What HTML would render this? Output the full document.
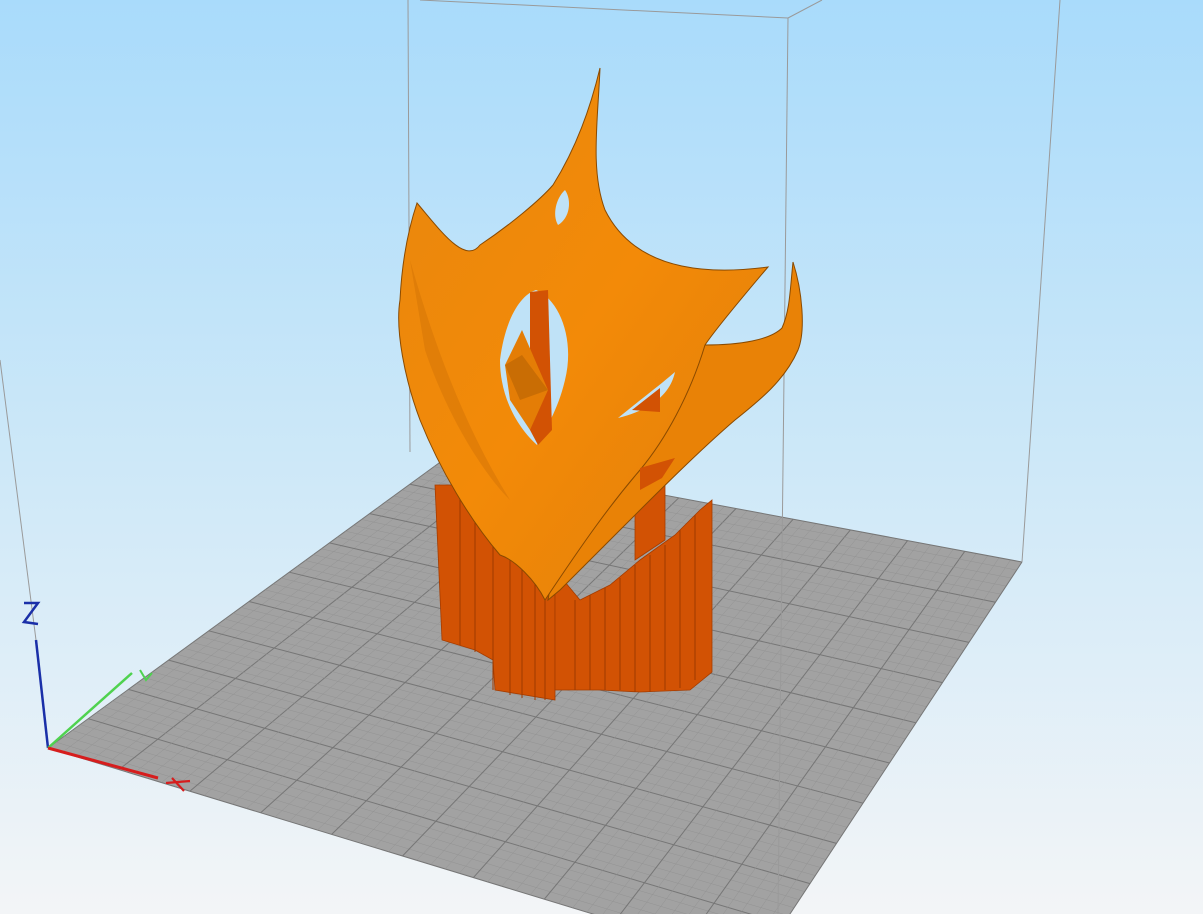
<!DOCTYPE html>
<html><head><meta charset="utf-8"><style>
html,body{margin:0;padding:0;width:1203px;height:914px;overflow:hidden;font-family:"Liberation Sans",sans-serif}
svg{display:block}
</style></head><body>
<svg id="s" width="1203" height="914" viewBox="0 0 1203 914" xmlns="http://www.w3.org/2000/svg">
<defs>
<linearGradient id="bg" x1="0" y1="0" x2="0" y2="1">
<stop offset="0" stop-color="#a9dbfb"/><stop offset="0.5" stop-color="#cde8f8"/><stop offset="1" stop-color="#f3f5f7"/>
</linearGradient>
<linearGradient id="or" x1="0" y1="0" x2="1" y2="1">
<stop offset="0" stop-color="#e8870e"/><stop offset="0.5" stop-color="#f38a08"/><stop offset="1" stop-color="#e07e0a"/>
</linearGradient>
</defs>
<rect width="1203" height="914" fill="url(#bg)"/>
<polygon points="48,748 450,455 1022,562 757,964" fill="#a2a2a2"/>
<g id="grid"></g>
<g stroke="#9a9a9a" stroke-width="1" fill="none">
<line x1="408" y1="0" x2="410" y2="452"/>
<line x1="788" y1="18" x2="778" y2="914"/>
<line x1="1060" y1="0" x2="1022" y2="562"/>
<line x1="788" y1="18" x2="822" y2="0"/>
<line x1="788" y1="18" x2="420" y2="0"/>
<line x1="0" y1="360" x2="36" y2="640"/>
</g>
<g fill="#d25204" stroke="#a53c00" stroke-width="0.8">
<path d="M435,485 L460,485 L475,500 L490,520 L505,540 L520,555 L540,545 L555,540 L555,700 L495,690 L493,660 L475,650 L442,640 Z"/>
<path d="M555,570 L580,600 L610,585 L640,560 L675,535 L700,510 L712,500 L712,672 L690,690 L640,692 L600,690 L565,690 L555,690 Z"/>
<path d="M635,480 L665,470 L665,540 L635,560 Z"/>
<path d="M528,290 L548,288 L552,560 L532,560 Z"/>
</g>
<g stroke="#9d3a00" stroke-width="1">
<line x1="460" y1="490" x2="460" y2="645"/><line x1="475" y1="505" x2="475" y2="652"/>
<line x1="493" y1="525" x2="493" y2="690"/><line x1="510" y1="545" x2="510" y2="695"/>
<line x1="522" y1="555" x2="522" y2="698"/><line x1="535" y1="550" x2="535" y2="700"/>
<line x1="545" y1="545" x2="545" y2="700"/>
<line x1="575" y1="600" x2="575" y2="690"/><line x1="590" y1="595" x2="590" y2="690"/>
<line x1="605" y1="588" x2="605" y2="690"/><line x1="620" y1="578" x2="620" y2="690"/>
<line x1="635" y1="565" x2="635" y2="692"/><line x1="650" y1="555" x2="650" y2="692"/>
<line x1="665" y1="545" x2="665" y2="690"/><line x1="680" y1="530" x2="680" y2="688"/>
<line x1="695" y1="515" x2="695" y2="680"/>
</g>
<path d="M705,345 C740,345 770,340 782,328 C790,310 790,290 793,262 C802,290 806,330 798,350 C785,380 760,400 735,420 C700,450 660,490 620,530 C595,555 575,575 560,590 L548,600 C560,520 600,430 705,345 Z" fill="#e98206" stroke="#8a4a00" stroke-width="1"/>
<path d="M417,203 C440,230 465,265 480,245 C510,225 540,200 553,185 C575,150 590,110 600,68 C598,120 590,170 605,210 C625,250 670,280 768,267 C740,300 715,330 705,345 C690,395 665,440 640,470 C610,505 585,540 545,600 C535,580 515,560 500,555 C470,520 440,470 420,420 C405,380 395,330 400,300 C402,260 408,230 417,203 Z" fill="url(#or)" stroke="#8a4a00" stroke-width="1"/>
<path d="M410,260 C430,330 460,420 510,500 C480,470 445,410 425,350 Z" fill="#d77606" opacity="0.6"/>
<path d="M536,290 C560,300 575,340 565,380 C558,410 545,430 537,445 C520,430 500,400 500,360 C505,320 520,295 536,290 Z" fill="#bfe2f7"/>
<path d="M530,292 L548,290 L552,430 L538,445 L530,430 Z" fill="#d25204"/>
<path d="M505,365 L522,330 L548,390 L530,430 L510,400 Z" fill="#e47d06"/>
<path d="M505,365 L522,355 L548,390 L520,400 Z" fill="#c96d04"/>
<path d="M565,190 C572,200 570,218 558,225 C552,215 556,198 565,190 Z" fill="#bfe2f7"/>
<path d="M618,418 C640,400 660,385 675,372 C670,395 650,410 618,418 Z" fill="#bfe2f7"/>
<path d="M632,410 L660,388 L660,412 Z" fill="#d25204"/>
<path d="M640,468 L675,458 L662,478 L640,490 Z" fill="#d25204"/>
<line x1="48" y1="748" x2="36" y2="640" stroke="#1a2fa8" stroke-width="2.5"/>
<line x1="48" y1="748" x2="132" y2="673" stroke="#4fd24f" stroke-width="2.5"/>
<line x1="48" y1="748" x2="158" y2="778" stroke="#d61d1d" stroke-width="3"/>
<path d="M24,603 L38,603 L24,622 L38,624" fill="none" stroke="#1a2fa8" stroke-width="2.5"/>
<path d="M166,783 L190,781 M172,778 L184,791" stroke="#d61d1d" stroke-width="2.2"/>
<path d="M140,670 L146,680 L152,673" stroke="#4fd24f" stroke-width="2" fill="none"/>
</svg>
<script>
(function(){
var A=[48,748],B=[757,964],C=[1022,562],D=[450,455];
function P(u,v){return [A[0]*(1-u)*(1-v)+B[0]*u*(1-v)+C[0]*u*v+D[0]*(1-u)*v,
A[1]*(1-u)*(1-v)+B[1]*u*(1-v)+C[1]*u*v+D[1]*(1-u)*v];}
var g=document.getElementById('grid'),h='';
var N=50;
for(var i=0;i<=N;i++){var t=i/N;var maj=(i%5==0);
var s=maj?'stroke="#767676" stroke-width="1"':'stroke="#939393" stroke-width="0.5"';
var a=P(t,0),b=P(t,1);h+='<line x1="'+a[0]+'" y1="'+a[1]+'" x2="'+b[0]+'" y2="'+b[1]+'" '+s+'/>';
a=P(0,t);b=P(1,t);h+='<line x1="'+a[0]+'" y1="'+a[1]+'" x2="'+b[0]+'" y2="'+b[1]+'" '+s+'/>';}
g.innerHTML=h;
})();
</script>
</body></html>
